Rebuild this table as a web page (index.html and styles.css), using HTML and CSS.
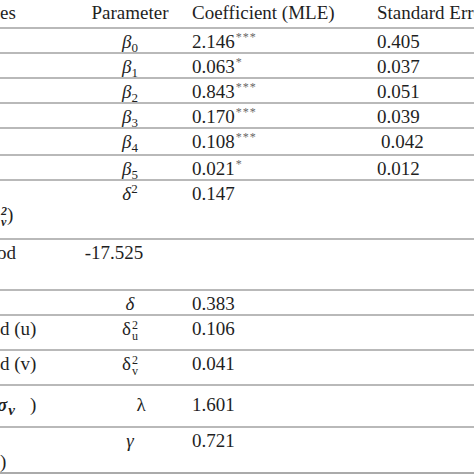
FILE: index.html
```html
<!DOCTYPE html>
<html lang="en">
<head>
  <meta charset="UTF-8"/>
  <title>Stochastic frontier estimates</title>
  <link rel="stylesheet" href="styles.css">
</head>
<body>
  <div class="sheet">
    <table class="results">
      <colgroup>
        <col class="c-label">
        <col class="c-param">
        <col class="c-coef">
        <col class="c-se">
      </colgroup>
      <thead>
        <tr>
          <th class="label">es</th>
          <th class="param">Parameter</th>
          <th>Coefficient (MLE)</th>
          <th>Standard Error</th>
        </tr>
      </thead>
      <tbody>
        <tr>
          <td class="label"></td>
          <td class="param"><i>β</i><sub>0</sub></td>
          <td>2.146<span class="sig">***</span></td>
          <td>0.405</td>
        </tr>
        <tr>
          <td class="label"></td>
          <td class="param"><i>β</i><sub>1</sub></td>
          <td>0.063<span class="sig">*</span></td>
          <td>0.037</td>
        </tr>
        <tr class="r25">
          <td class="label"></td>
          <td class="param"><i>β</i><sub>2</sub></td>
          <td>0.843<span class="sig">***</span></td>
          <td>0.051</td>
        </tr>
        <tr class="r24">
          <td class="label"></td>
          <td class="param"><i>β</i><sub>3</sub></td>
          <td>0.170<span class="sig">***</span></td>
          <td>0.039</td>
        </tr>
        <tr class="r28">
          <td class="label"></td>
          <td class="param"><i>β</i><sub>4</sub></td>
          <td>0.108<span class="sig">***</span></td>
          <td class="nudge">0.042</td>
        </tr>
        <tr>
          <td class="label"></td>
          <td class="param"><i>β</i><sub>5</sub></td>
          <td>0.021<span class="sig">*</span></td>
          <td>0.012</td>
        </tr>
        <tr class="r60">
          <td class="label">&nbsp;<br><span class="stack bold"><span>2</span><span>v</span></span>)</td>
          <td class="param"><i>δ</i><sup>2</sup></td>
          <td>0.147</td>
          <td></td>
        </tr>
        <tr class="r52">
          <td class="label clip">od</td>
          <td class="param shift-left">-17.525</td>
          <td></td>
          <td></td>
        </tr>
        <tr>
          <td class="label"></td>
          <td class="param"><i>δ</i></td>
          <td>0.383</td>
          <td></td>
        </tr>
        <tr class="r34">
          <td class="label">d (u)</td>
          <td class="param">δ<span class="stack"><span>2</span><span>u</span></span></td>
          <td>0.106</td>
          <td></td>
        </tr>
        <tr class="r34">
          <td class="label">d (v)</td>
          <td class="param">δ<span class="stack"><span>2</span><span>v</span></span></td>
          <td>0.041</td>
          <td></td>
        </tr>
        <tr class="r41 low">
          <td class="label clip"><b><i>σ</i></b><sub class="bold wide">v</sub>)</td>
          <td class="param shift-right">λ</td>
          <td>1.601</td>
          <td></td>
        </tr>
        <tr class="r46 last">
          <td class="label">&nbsp;<br>)</td>
          <td class="param"><i>γ</i></td>
          <td>0.721</td>
          <td></td>
        </tr>
      </tbody>
    </table>
  </div>
</body>
</html>
```

FILE: styles.css
```css
:root {
  --ink:  #1f1f1f;
  --rule: #b9b9b9;
  --rule-dark: #aaaaaa;
}
* { box-sizing: border-box; margin: 0; padding: 0; }
html, body {
  width: 474px;
  height: 474px;
  overflow: hidden;
  background: #fff;
}
body {
  font-family: "Liberation Serif", "Times New Roman", serif;
  font-size: 19px;
  line-height: 21px;
  color: var(--ink);
}
.sheet {
  width: 474px;
  overflow: hidden;
}

.results {
  width: 520px;
  table-layout: fixed;
  border-collapse: collapse;
}
.c-label { width: 75px; }
.c-param { width: 110px; }
.c-coef  { width: 185px; }
.c-se    { width: 150px; }

.results th,
.results td {
  text-align: left;
  font-weight: normal;
  vertical-align: top;
  white-space: nowrap;
  padding: 2px 0 0 7px;
  border-bottom: 2px solid var(--rule);
}
.results th {
  height: 23px;
  vertical-align: bottom;
  padding-bottom: 4px;
}
.results td { height: 25px; }

.results .label { padding-left: 0; }
.results .param { text-align: center; padding-left: 0; }
.results .clip { text-indent: -3px; }
.results .shift-left { padding-right: 32px; }
.results .shift-right { padding-left: 22px; }
.results .nudge { padding-left: 11px; }

.r24 td { height: 23px; }
.r25 td { height: 24px; }
.r28 td { height: 27px; }
.r34 td { height: 35px; }
.r41 td { height: 42px; }
.r46 td { height: 47px; }
.r52 td { height: 51px; }
.r60 td { height: 59px; }
.low td { padding-top: 8px; }
.last td { padding-top: 2px; border-bottom: 4px solid var(--rule-dark); }

sub, sup {
  font-size: 13px;
  line-height: 0;
}
sub { vertical-align: -4px; }
sup { vertical-align: 7px; }
sub.wide { font-size: 15px; margin-left: 1px; margin-right: 15px; }

.sig {
  font-size: 12px;
  letter-spacing: 1px;
  vertical-align: 7px;
  line-height: 0;
  margin-left: 1px;
  color: #666;
}

.stack {
  display: inline-flex;
  flex-direction: column;
  font-size: 12px;
  line-height: 11px;
  vertical-align: 6px;
  margin-left: 1px;
}
.bold { font-weight: bold; font-style: italic; }
```
